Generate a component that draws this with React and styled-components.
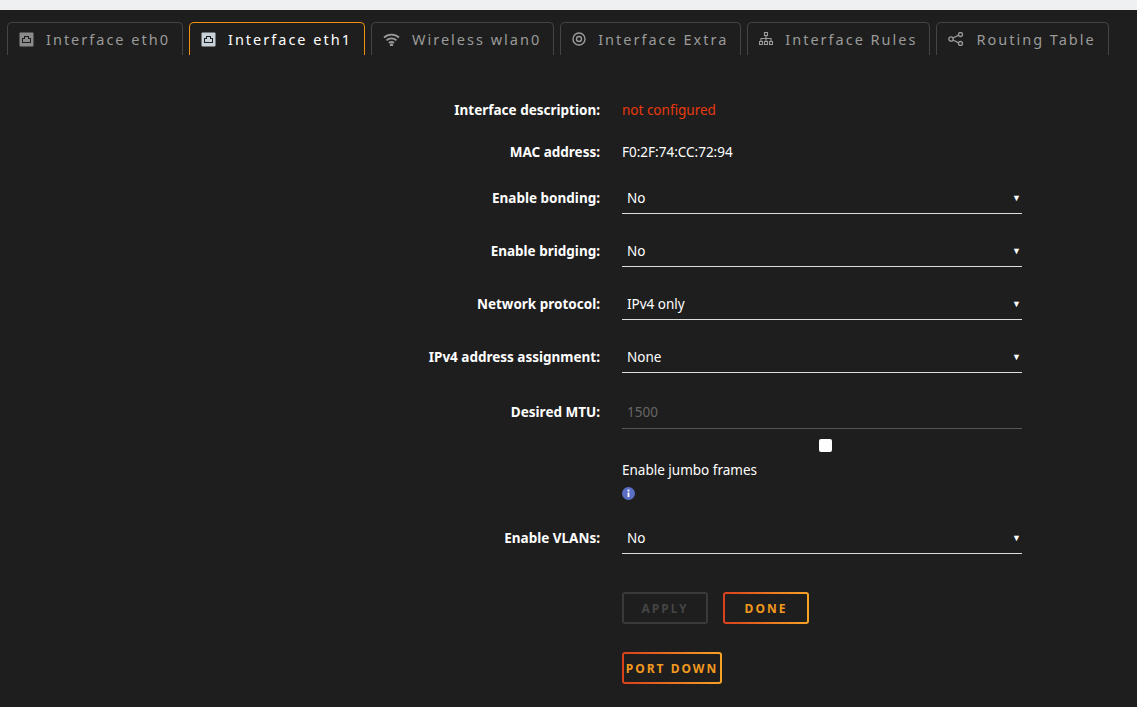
import React from "react";
import styled, { createGlobalStyle } from "styled-components";

const G = createGlobalStyle`
  html,body{margin:0;background:#1e1e1e;font-family:"Noto Sans","Open Sans",sans-serif;}
`;
const TopStrip = styled.div`height:10px;background:#eff0f2;`;
const Tabs = styled.div`display:flex;gap:6px;padding:12px 0 0 7px;height:33px;`;
const Tab = styled.div`
  display:flex;align-items:center;gap:12px;padding:0 12px 0 11px;height:33px;box-sizing:border-box;
  border:1px solid ${p=>p.$active?"#f29111":"#444"};border-bottom:none;border-radius:5px 5px 0 0;
  color:${p=>p.$active?"#fff":"#9a9a9a"};font-size:14.5px;letter-spacing:2px;
  svg{flex:none}
`;
const Form = styled.div`display:grid;grid-template-columns:600px 400px;column-gap:22px;padding-top:34px;`;
const Label = styled.div`
  color:#fff;font-weight:700;font-size:13.5px;height:${p=>p.$h}px;box-sizing:border-box;padding-top:${p=>p.$pt||0}px;
  display:flex;align-items:center;justify-content:flex-end;text-align:right;
`;
const Value = styled.div`color:${p=>p.$c||"#fff"};font-size:13.5px;height:${p=>p.$h}px;display:flex;align-items:center;`;
const Select = styled.div`
  height:${p=>p.$h}px;box-sizing:border-box;display:flex;align-items:center;justify-content:space-between;
  border-bottom:1px solid ${p=>p.$dim?"#555":"#ddd"};padding:${p=>p.$pt||0}px 0 0 5px;color:${p=>p.$dim?"#666":"#fff"};font-size:13.5px;
`;
const Arrow = styled.span`font-size:9px;color:#fff;margin-right:1px;`;
const Jumbo = styled.div`display:flex;flex-direction:column;color:#fff;font-size:13.5px;padding-top:10px;`;
const Box = styled.div`width:13px;height:13px;background:#fff;border-radius:2px;margin-left:197px;`;
const JumboText = styled.span`margin-top:9px;`;
const Info = styled.svg`margin-top:8px;`;
const Btns = styled.div`display:flex;gap:15px;padding-top:${p=>p.$pt}px;`;
const Btn = styled.div`
  height:32px;box-sizing:border-box;width:${p=>p.$w}px;
  display:flex;align-items:center;justify-content:center;border-radius:3px;font-weight:700;font-size:12px;letter-spacing:2px;
  color:${p=>p.$dis?"#444":"#f29a1f"};border:2px solid transparent;
  background:${p=>p.$dis?"linear-gradient(#1e1e1e,#1e1e1e) padding-box, linear-gradient(#3a3a3a,#3a3a3a) border-box":"linear-gradient(#1e1e1e,#1e1e1e) padding-box, linear-gradient(90deg,#d8401c,#f7a326) border-box"};
`;

const Eth=({c})=>(<svg width="15" height="15" viewBox="0 0 15 15"><rect x=".5" y=".5" width="14" height="14" rx="1" fill={c} /><path d="M3 11V6h2V4h5v2h2v5z" fill="#1e1e1e"/><path d="M4 10V7h2V5h3v2h2v3z" fill={c}/></svg>);

export default function App(){
  const rows=[["Enable bonding:","No",41,9],["Enable bridging:","No",53,21],["Network protocol:","IPv4 only",53,21],["IPv4 address assignment:","None",53,21]];
  return(<>
    <G/>
    <TopStrip/>
    <Tabs>
      <Tab><Eth c="#8a8a8a"/>Interface eth0</Tab>
      <Tab $active><Eth c="#c8d0d8"/>Interface eth1</Tab>
      <Tab><svg width="17" height="13" viewBox="0 0 17 13" fill="none" stroke="#9a9a9a" strokeWidth="1.8"><path d="M1 4.5a11 11 0 0 1 15 0M3.5 7.3a7.5 7.5 0 0 1 10 0M6 10a3.5 3.5 0 0 1 5 0"/><circle cx="8.5" cy="12" r=".8" fill="#9a9a9a"/></svg>Wireless wlan0</Tab>
      <Tab><svg width="14" height="14" viewBox="0 0 14 14" fill="none" stroke="#9a9a9a" strokeWidth="1.4"><circle cx="7" cy="7" r="6"/><circle cx="7" cy="7" r="2.5"/></svg>Interface Extra</Tab>
      <Tab><svg width="14" height="14" viewBox="0 0 14 14" fill="none" stroke="#9a9a9a" strokeWidth="1.1"><rect x="5.5" y=".5" width="3" height="3"/><path d="M7 3.5v3M2 9V6.5h10V9M7 6.5V9"/><rect x=".5" y="9.5" width="3" height="3"/><rect x="5.5" y="9.5" width="3" height="3"/><rect x="10.5" y="9.5" width="3" height="3"/></svg>Interface Rules</Tab>
      <Tab><svg width="16" height="14" viewBox="0 0 16 14" fill="none" stroke="#9a9a9a" strokeWidth="1.3"><circle cx="3" cy="7" r="2.2"/><circle cx="12.5" cy="2.5" r="2"/><circle cx="12.5" cy="11.5" r="2"/><path d="M5 6l5.7-2.8M5 8l5.7 2.8"/></svg>Routing Table</Tab>
    </Tabs>
    <Form>
      <Label $h={42}>Interface description:</Label><Value $h={42} $c="#e8390e">not configured</Value>
      <Label $h={42}>MAC address:</Label><Value $h={42}>F0:2F:74:CC:72:94</Value>
      {rows.map(([l,v,h,pt])=>(<React.Fragment key={l}>
        <Label $h={h} $pt={pt}>{l}</Label>
        <Select $h={h} $pt={pt}>{v}<Arrow>▼</Arrow></Select>
      </React.Fragment>))}
      <Label $h={56} $pt={22}>Desired MTU:</Label><Select $h={56} $pt={22} $dim>1500</Select>
      <div/><Jumbo><Box/><JumboText>Enable jumbo frames</JumboText>
        <Info width="13" height="13" viewBox="0 0 13 13"><circle cx="6.5" cy="6.5" r="6.5" fill="#5a6fc4"/><rect x="5.6" y="5.5" width="1.8" height="4.5" fill="#fff"/><circle cx="6.5" cy="3.6" r="1.1" fill="#fff"/></Info>
      </Jumbo>
      <Label $h={54} $pt={22}>Enable VLANs:</Label>
      <Select $h={54} $pt={22}>No<Arrow>▼</Arrow></Select>
      <div/><div>
        <Btns $pt={38}><Btn $dis $w={86}>APPLY</Btn><Btn $w={86}>DONE</Btn></Btns>
        <Btns $pt={28}><Btn $w={100}>PORT DOWN</Btn></Btns>
      </div>
    </Form>
  </>);
}
